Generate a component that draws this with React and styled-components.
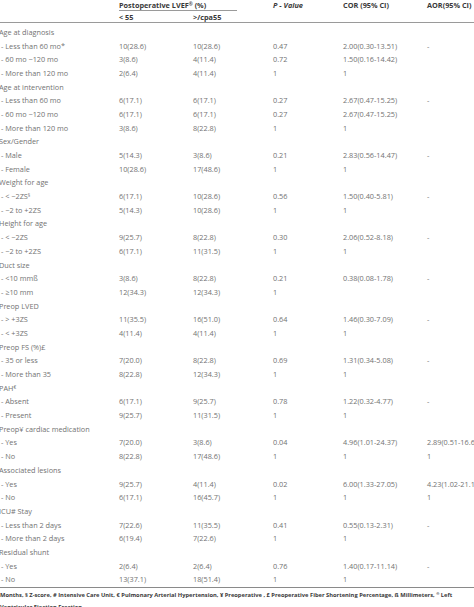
import styled, { createGlobalStyle } from "styled-components";

const GlobalStyle = createGlobalStyle`
  html, body {
    margin: 0;
    padding: 0;
    background: #fff;
    overflow: hidden;
  }
  body {
    font-family: "Open Sans", "Liberation Sans", sans-serif;
  }
`;

const COLS = "120px 74px 80px 70px 84px 1fr";

const Page = styled.div`
  width: 480px;
  margin-left: -1px;
  color: #727272;
  font-size: 7.3px;
  white-space: nowrap;
`;

const Head = styled.div`
  display: grid;
  grid-template-columns: ${COLS};
  grid-template-rows: 12px 11px;
  border-bottom: 1px solid #9a9a9a;
  margin-top: -1px;
`;

const HeadCell = styled.div`
  font-weight: 700;
  color: #3a3a3a;
  font-style: ${(p) => (p.$italic ? "italic" : "normal")};
  grid-column: ${(p) => p.$col};
  grid-row: ${(p) => p.$row};
  line-height: 12px;
`;

const Spanner = styled.div`
  grid-column: 2 / 4;
  grid-row: 1;
  width: 118px;
  border-bottom: 1px solid #9a9a9a;
  font-weight: 700;
  color: #3a3a3a;
  line-height: 12px;
`;

const Body = styled.div`
  padding-top: 2px;
  border-bottom: 1px solid #8a8a8a;
  padding-bottom: 1px;
`;

const Row = styled.div`
  display: grid;
  grid-template-columns: ${COLS};
  height: 13.7px;
  align-items: center;
`;

const Cell = styled.div`
  padding-left: ${(p) => (p.$indent ? "2px" : "0")};
`;

const Sup = styled.sup`
  font-size: 0.65em;
  line-height: 0;
  vertical-align: 0.5em;
`;

const Foot = styled.div`
  font-weight: 700;
  color: #3a3a3a;
  font-size: 5.75px;
  line-height: 12px;
  padding-top: 1px;
  margin-left: 1px;
`;

const groups = [
  {
    label: "Age at diagnosis",
    rows: [
      [<>- Less than 60 mo*</>, "10(28.6)", "10(28.6)", "0.47", "2.00(0.30-13.51)", "-"],
      [<>- 60 mo −120 mo</>, "3(8.6)", "4(11.4)", "0.72", "1.50(0.16-14.42)", ""],
      [<>- More than 120 mo</>, "2(6.4)", "4(11.4)", "1", "1", ""],
    ],
  },
  {
    label: "Age at intervention",
    rows: [
      [<>- Less than 60 mo</>, "6(17.1)", "6(17.1)", "0.27", "2.67(0.47-15.25)", "-"],
      [<>- 60 mo −120 mo</>, "6(17.1)", "6(17.1)", "0.27", "2.67(0.47-15.25)", ""],
      [<>- More than 120 mo</>, "3(8.6)", "8(22.8)", "1", "1", ""],
    ],
  },
  {
    label: "Sex/Gender",
    rows: [
      [<>- Male</>, "5(14.3)", "3(8.6)", "0.21", "2.83(0.56-14.47)", "-"],
      [<>- Female</>, "10(28.6)", "17(48.6)", "1", "1", ""],
    ],
  },
  {
    label: "Weight for age",
    rows: [
      [<>- &lt; −2ZS<Sup>§</Sup></>, "6(17.1)", "10(28.6)", "0.56", "1.50(0.40-5.81)", "-"],
      [<>- −2 to +2ZS</>, "5(14.3)", "10(28.6)", "1", "1", ""],
    ],
  },
  {
    label: "Height for age",
    rows: [
      [<>- &lt; −2ZS</>, "9(25.7)", "8(22.8)", "0.30", "2.06(0.52-8.18)", "-"],
      [<>- −2 to +2ZS</>, "6(17.1)", "11(31.5)", "1", "1", ""],
    ],
  },
  {
    label: "Duct size",
    rows: [
      [<>- &lt;10 mmß</>, "3(8.6)", "8(22.8)", "0.21", "0.38(0.08-1.78)", "-"],
      [<>- ≥10 mm</>, "12(34.3)", "12(34.3)", "1", "", ""],
    ],
  },
  {
    label: "Preop LVED",
    rows: [
      [<>- &gt; +3ZS</>, "11(35.5)", "16(51.0)", "0.64", "1.46(0.30-7.09)", "-"],
      [<>- &lt; +3ZS</>, "4(11.4)", "4(11.4)", "1", "1", ""],
    ],
  },
  {
    label: <>Preop FS (%)£</>,
    rows: [
      [<>- 35 or less</>, "7(20.0)", "8(22.8)", "0.69", "1.31(0.34-5.08)", "-"],
      [<>- More than 35</>, "8(22.8)", "12(34.3)", "1", "1", ""],
    ],
  },
  {
    label: <>PAH<Sup>€</Sup></>,
    rows: [
      [<>- Absent</>, "6(17.1)", "9(25.7)", "0.78", "1.22(0.32-4.77)", "-"],
      [<>- Present</>, "9(25.7)", "11(31.5)", "1", "1", ""],
    ],
  },
  {
    label: "Preop¥ cardiac medication",
    rows: [
      [<>- Yes</>, "7(20.0)", "3(8.6)", "0.04", "4.96(1.01-24.37)", "2.89(0.51-16.64)"],
      [<>- No</>, "8(22.8)", "17(48.6)", "1", "1", "1"],
    ],
  },
  {
    label: "Associated lesions",
    rows: [
      [<>- Yes</>, "9(25.7)", "4(11.4)", "0.02", "6.00(1.33-27.05)", "4.23(1.02-21.16)"],
      [<>- No</>, "6(17.1)", "16(45.7)", "1", "1", "1"],
    ],
  },
  {
    label: "ICU# Stay",
    rows: [
      [<>- Less than 2 days</>, "7(22.6)", "11(35.5)", "0.41", "0.55(0.13-2.31)", "-"],
      [<>- More than 2 days</>, "6(19.4)", "7(22.6)", "1", "1", ""],
    ],
  },
  {
    label: "Residual shunt",
    rows: [
      [<>- Yes</>, "2(6.4)", "2(6.4)", "0.76", "1.40(0.17-11.14)", "-"],
      [<>- No</>, "13(37.1)", "18(51.4)", "1", "1", ""],
    ],
  },
];

export default function App() {
  return (
    <>
      <GlobalStyle />
      <Page>
        <Head>
          <Spanner>
            Postoperative LVEF<Sup>®</Sup> (%)
          </Spanner>
          <HeadCell $col={4} $row="1" $italic>P - Value</HeadCell>
          <HeadCell $col={5} $row="1">COR (95% CI)</HeadCell>
          <HeadCell $col={6} $row="1">AOR(95% CI)</HeadCell>
          <HeadCell $col={2} $row="2">&lt; 55</HeadCell>
          <HeadCell $col={3} $row="2">&gt;/cpa55</HeadCell>
        </Head>
        <Body>
          {groups.map((g, gi) => (
            <div key={gi}>
              <Row>
                <Cell>{g.label}</Cell>
              </Row>
              {g.rows.map((r, ri) => (
                <Row key={ri}>
                  {r.map((c, ci) => (
                    <Cell key={ci} $indent={ci === 0}>{c}</Cell>
                  ))}
                </Row>
              ))}
            </div>
          ))}
        </Body>
        <Foot>
          Months, § Z-score, # Intensive Care Unit, € Pulmonary Arterial Hypertension, ¥ Preoperative , £ Preoperative Fiber Shortening Percentage, ß Millimeters, <Sup>®</Sup> Left
          <br />
          Ventricular Ejection Fraction.
        </Foot>
      </Page>
    </>
  );
}
